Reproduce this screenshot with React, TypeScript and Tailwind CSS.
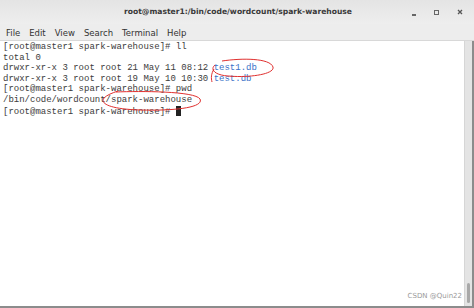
const lines = [
  "[root@master1 spark-warehouse]# ll",
  "total 0",
  "drwxr-xr-x 3 root root 21 May 11 08:12 ",
  "drwxr-xr-x 3 root root 19 May 10 10:30 ",
  "[root@master1 spark-warehouse]# pwd",
  "/bin/code/wordcount/spark-warehouse",
  "[root@master1 spark-warehouse]# ",
];

const menus = ["File", "Edit", "View", "Search", "Terminal", "Help"];

export default function App() {
  return (
    <div className="w-[474px] h-[308px] flex flex-col bg-white overflow-hidden">
      {/* title bar */}
      <div className="h-[24px] flex items-center bg-gradient-to-b from-[#e4e4e4] to-[#eeeeee] relative">
        <div className="flex-1 text-center text-[7.6px] font-semibold text-[#3a3a3a] pl-[2px]" style={{ fontFamily: "'DejaVu Sans', sans-serif" }}>
          root@master1:/bin/code/wordcount/spark-warehouse
        </div>
        <div className="absolute right-0 top-0 h-[24px] flex items-center gap-[18px] pr-[11px]">
          <span className="w-[4px] h-[2px] bg-[#666] mt-[5px]" />
          <span className="w-[5px] h-[5px] border-[1.5px] border-[#666]" />
          <svg width="6" height="6" viewBox="0 0 6 6"><path d="M1 1L5 5M5 1L1 5" stroke="#555" strokeWidth="1.3" /></svg>
        </div>
      </div>
      {/* menu bar */}
      <div className="h-[17px] flex items-center gap-[9px] pl-[6px] pt-[2px] bg-[#ededed] border-b border-[#d8d8d8] text-[8.5px] text-[#333]" style={{ fontFamily: "'DejaVu Sans', sans-serif" }}>
        {menus.map((m) => (
          <span key={m}>{m}</span>
        ))}
      </div>
      <div className="flex-1 flex">
        {/* terminal */}
        <div className="flex-1 relative pt-[1px] pl-[3px] text-[9px] leading-[10.6px] text-[#3c3c3c] whitespace-pre" style={{ fontFamily: "'Liberation Mono', monospace" }}>
          {lines.map((l, i) => (
            <div key={i}>
              {l}
              {i === 2 && <span className="text-[#3a72c8]">test1.db</span>}
              {i === 3 && <span className="text-[#3a72c8]">test.db</span>}
              {i === 6 && <span className="inline-block w-[5px] h-[10px] bg-[#222] align-[-2px]" />}
            </div>
          ))}
          <svg className="absolute left-0 top-0" width="300" height="90" viewBox="0 0 300 90">
            <path d="M222 20 C 242 17, 270 17, 273 26 C 275 33, 250 37, 228 35 C 214 34, 210 28, 215 24 M214 28 C 211 33, 211 37, 212 41" fill="none" stroke="#e0302f" strokeWidth="1" />
            <path d="M116 51 C 140 50, 195 50, 200 58 C 204 66, 178 70, 140 69 C 108 68, 100 62, 104 57 C 107 54, 112 52, 118 50" fill="none" stroke="#e0302f" strokeWidth="1" />
          </svg>
          <div className="absolute right-[2px] bottom-[4px] text-[7px] text-[#9a9a9a]" style={{ fontFamily: "'DejaVu Sans', sans-serif" }}>
            CSDN @Quin22
          </div>
        </div>
        {/* scrollbar */}
        <div className="w-[8px] bg-[#e4e4e4] border-l border-[#d6d6d6] flex flex-col justify-end items-center pb-[3px]">
          <div className="w-[3px] h-[20px] rounded-full bg-[#a8a8a8]" />
        </div>
        <div className="w-[2px] bg-[#8c8c8c]" />
      </div>
      <div className="h-[2px] bg-[#8c8c8c]" />
    </div>
  );
}
